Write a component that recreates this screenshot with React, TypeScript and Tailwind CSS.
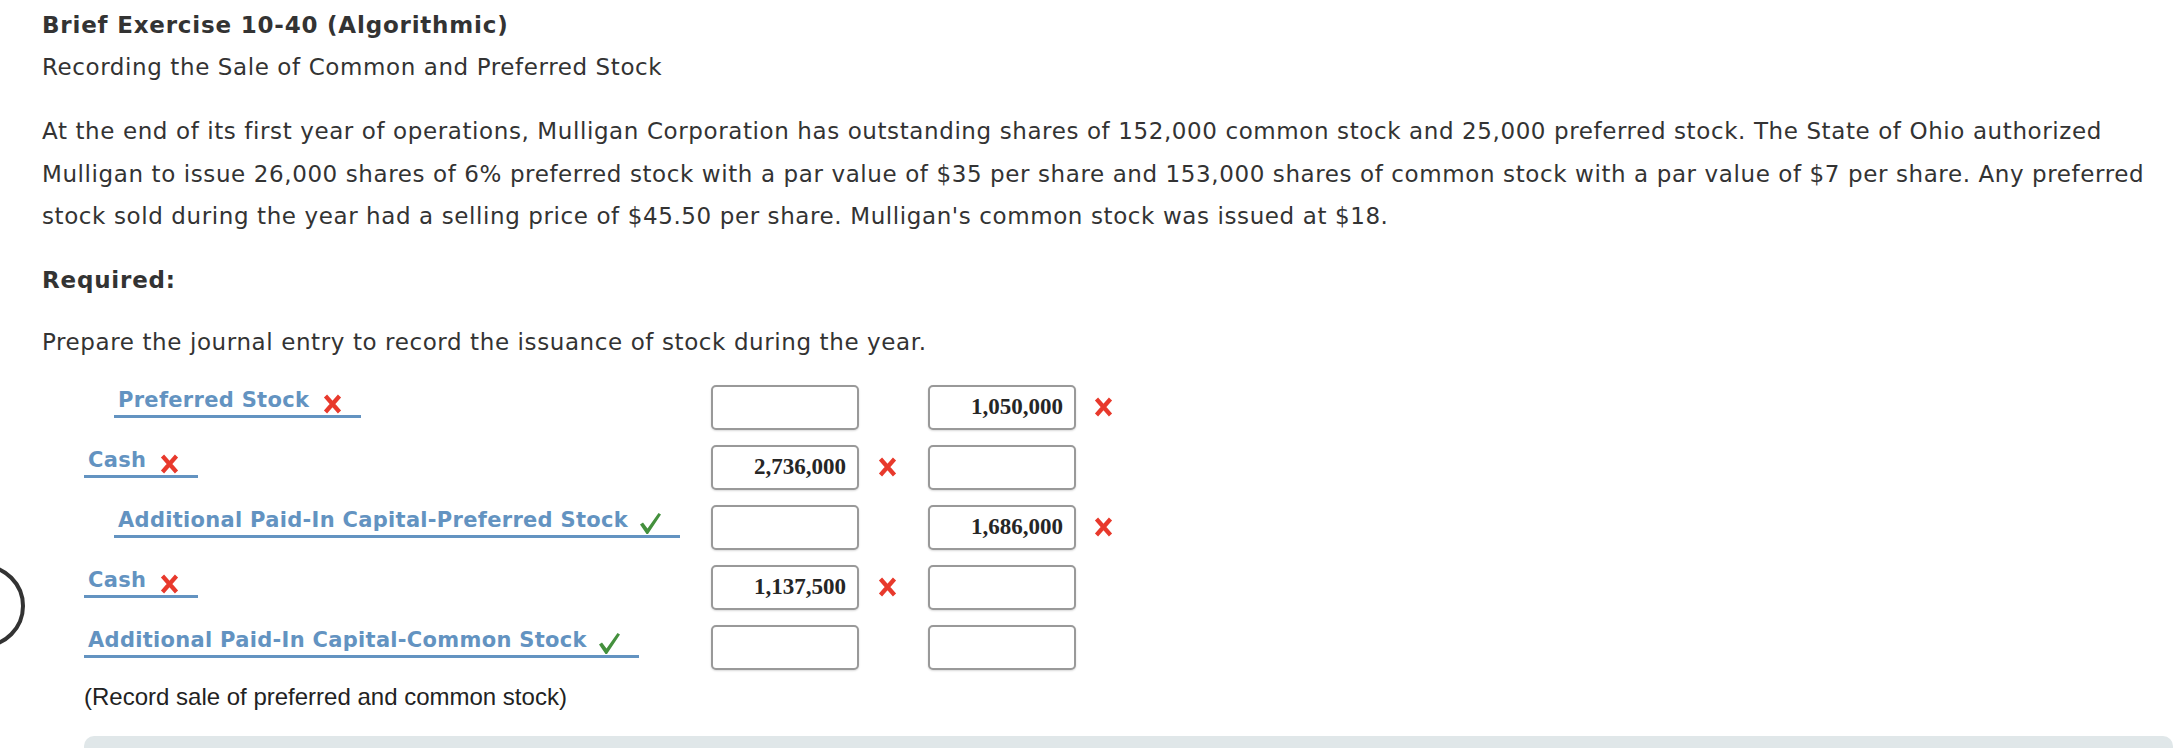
import React from "react";

function XMark({ className = "" }: { className?: string }) {
  return (
    <svg className={className} viewBox="0 0 19 20" width="19" height="20">
      <path d="M2.5 2 L16.5 18 M16.5 2 L2.5 18" stroke="#e8392c" strokeWidth="4.2" strokeLinecap="butt" fill="none" />
    </svg>
  );
}

function Check({ className = "" }: { className?: string }) {
  return (
    <svg className={className} viewBox="0 0 24 24" width="24" height="24">
      <path d="M2 13.5 L5 11.5 L9.5 17.5 L20.5 2 L23 3.5 L10 23 L8.5 23 Z" fill="#44903d" />
    </svg>
  );
}

type Row = {
  label: string;
  indent: "debit" | "credit";
  mark: "x" | "check";
  debit?: string;
  credit?: string;
  debitX?: boolean;
  creditX?: boolean;
};

const rows: Row[] = [
  { label: "Preferred Stock", indent: "credit", mark: "x", credit: "1,050,000", creditX: true },
  { label: "Cash", indent: "debit", mark: "x", debit: "2,736,000", debitX: true },
  { label: "Additional Paid-In Capital-Preferred Stock", indent: "credit", mark: "check", credit: "1,686,000", creditX: true },
  { label: "Cash", indent: "debit", mark: "x", debit: "1,137,500", debitX: true },
  { label: "Additional Paid-In Capital-Common Stock", indent: "debit", mark: "check" },
];

function Box({ value }: { value?: string }) {
  return (
    <div className="w-[148px] h-[45px] shrink-0 rounded-[5px] border-2 border-[#999999] bg-white shadow-[0_1px_2px_rgba(0,0,0,0.15)] flex items-center justify-end pr-[11px] font-['Liberation_Serif',serif] font-bold text-[23px] text-[#262626]">
      {value}
    </div>
  );
}

export default function App() {
  return (
    <div className="relative w-[2184px] h-[748px] overflow-hidden bg-white text-[#333333] font-['DejaVu_Sans',Verdana,sans-serif]">
      <div className="absolute left-[-59px] top-[564px] w-[84px] h-[84px] rounded-full border-[4px] border-[#333333]" />
      <div className="pl-[42px] pt-[10px]">
        <h1 className="text-[23px] leading-[30px] font-bold tracking-[0.8px]">Brief Exercise 10-40 (Algorithmic)</h1>
        <p className="mt-[12px] text-[23px] leading-[30px] tracking-[0.6px]">Recording the Sale of Common and Preferred Stock</p>
        <p className="mt-[28px] text-[23px] leading-[42.5px] tracking-[0.6px] whitespace-nowrap">
          At the end of its first year of operations, Mulligan Corporation has outstanding shares of 152,000 common stock and 25,000 preferred stock. The State of Ohio authorized
          <br />
          Mulligan to issue 26,000 shares of 6% preferred stock with a par value of $35 per share and 153,000 shares of common stock with a par value of $7 per share. Any preferred
          <br />
          stock sold during the year had a selling price of $45.50 per share. Mulligan's common stock was issued at $18.
        </p>
        <p className="mt-[21px] text-[23px] leading-[42px] font-bold tracking-[0.8px]">Required:</p>
        <p className="mt-[26px] text-[23px] leading-[30px] tracking-[0.6px]">Prepare the journal entry to record the issuance of stock during the year.</p>
      </div>

      <div className="mt-[28px] flex flex-col gap-[15px]">
        {rows.map((r, i) => (
          <div key={i} className="flex items-start">
            <div className={`w-[711px] shrink-0 ${r.indent === "credit" ? "pl-[114px]" : "pl-[84px]"}`}>
              <div className={`inline-flex items-end h-[33px] border-b-[3px] border-[#6393c1] pl-[4px] ${r.mark === "x" ? "pr-[19px] gap-[14px]" : "pr-[18px] gap-[10px]"}`}>
                <span className="text-[21px] leading-[24px] pb-[3px] font-bold tracking-[0.3px] text-[#6393c1] whitespace-nowrap">{r.label}</span>
                {r.mark === "x" ? <XMark className="mb-[1px]" /> : <Check className="mb-[0px]" />}
              </div>
            </div>
            <Box value={r.debit} />
            <div className="w-[69px] shrink-0 h-[45px] flex items-center pl-[19px]">
              {r.debitX && <XMark />}
            </div>
            <Box value={r.credit} />
            <div className="w-[60px] shrink-0 h-[45px] flex items-center pl-[18px]">
              {r.creditX && <XMark />}
            </div>
          </div>
        ))}
      </div>

      <p className="mt-[12px] pl-[84px] text-[24px] leading-[30px] font-['Liberation_Sans',Arial,sans-serif] text-[#222222]">
        (Record sale of preferred and common stock)
      </p>
      <div className="mt-[24px] ml-[84px] w-[2089px] h-[30px] rounded-[10px] bg-[#e0e7e9]" />
    </div>
  );
}
